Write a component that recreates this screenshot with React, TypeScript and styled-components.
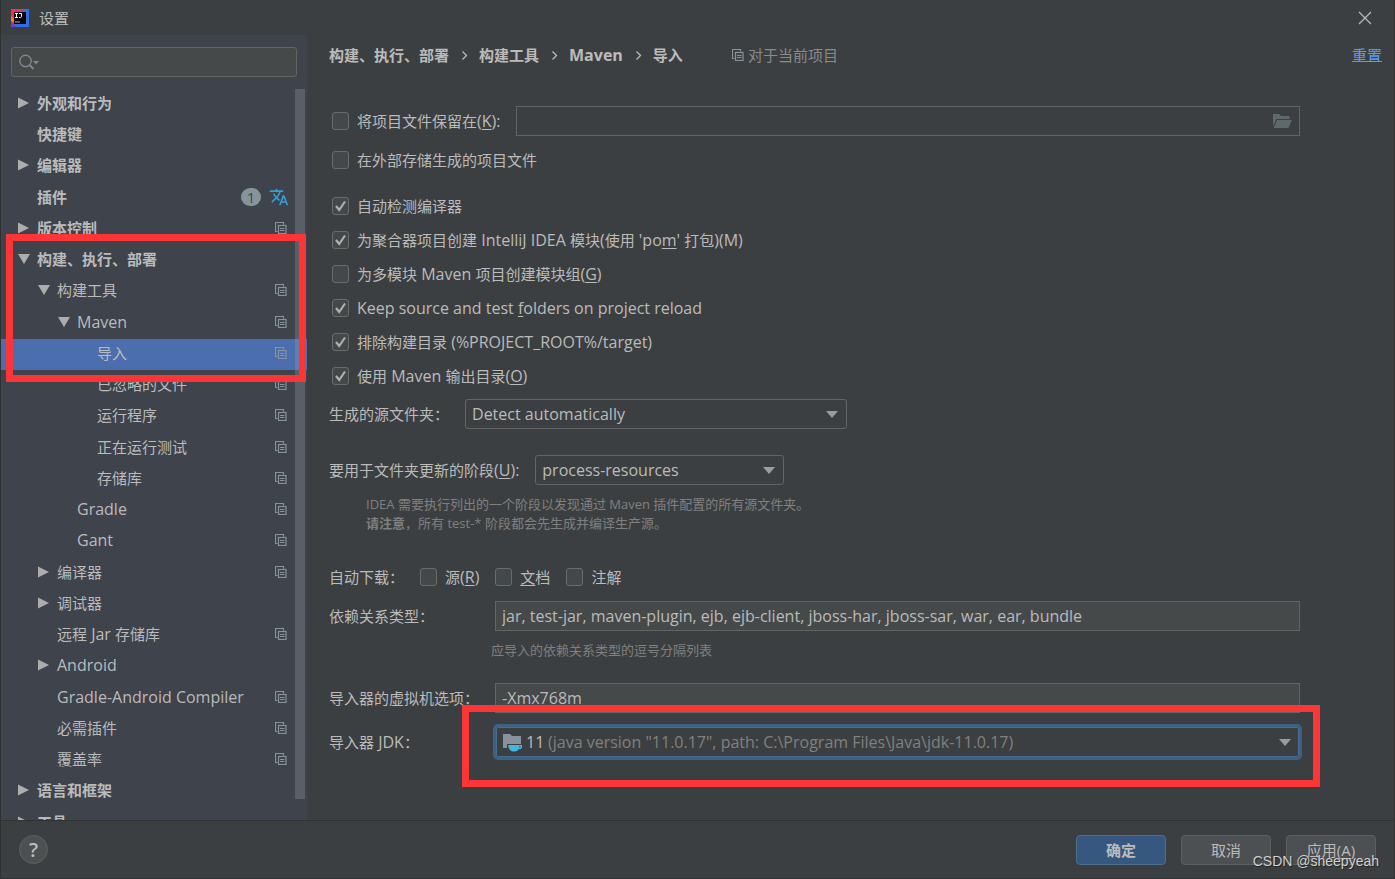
import React, { useId, useState } from "react";
import styled, { createGlobalStyle, css } from "styled-components";
import { MdTranslate } from "react-icons/md";

const GlobalStyle = createGlobalStyle`
  * { box-sizing: border-box; }
  html, body { margin: 0; height: 100%; }
  #root { height: 100%; }
  body, button, input, select {
    font-family: "Open Sans", "Noto Sans CJK SC", sans-serif;
    font-size: 15px;
    line-height: 20px;
    color: #bbbbbb;
  }
  body { background: #3c3f41; }
  u { text-underline-offset: 2px; }
`;

/* Latin runs are set one size up so that they balance the Chinese text. */
const Latin = styled.span`
  font-size: 16px;
`;

const Window = styled.div`
  position: relative;
  display: flex;
  flex-direction: column;
  height: 100vh;
  min-height: 600px;
  background: #3c3f41;
  border: 1px solid #2f3133;
  border-top: 0;
  overflow: hidden;
`;

const TitleBar = styled.header`
  display: flex;
  align-items: center;
  gap: 10px;
  height: 35px;
  flex: none;
  padding: 0 22px 0 10px;
`;

const Title = styled.h1`
  flex: 1;
  margin: 0;
  font-size: 15px;
  font-weight: 400;
`;

const PlainButton = styled.button`
  display: flex;
  padding: 0;
  border: 0;
  background: none;
  cursor: pointer;
`;

const Body = styled.div`
  display: flex;
  flex: 1;
  min-height: 0;
`;

const Sidebar = styled.aside`
  display: flex;
  flex-direction: column;
  width: 306px;
  flex: none;
  padding-top: 12px;
  background: #3e434c;
`;

const SearchBox = styled.label`
  display: flex;
  align-items: center;
  height: 30px;
  flex: none;
  margin: 0 10px 12px;
  padding-left: 7px;
  border: 1px solid #646464;
  border-radius: 3px;
  background: #45494a;
`;

const SearchInput = styled.input`
  flex: 1;
  min-width: 0;
  height: 100%;
  border: 0;
  outline: 0;
  background: none;
`;

const TreeArea = styled.div`
  position: relative;
  flex: 1;
  min-height: 0;
`;

const Tree = styled.ul`
  height: 100%;
  margin: 0;
  padding: 0;
  list-style: none;
  overflow: hidden;
`;

const TreeRow = styled.li<{ $level: number; $selected?: boolean }>`
  display: flex;
  align-items: center;
  height: 31px;
  padding: 0 20px 4px ${(p) => 15 + p.$level * 20}px;
  font-weight: ${(p) => (p.$level === 0 ? 700 : 400)};
  background: ${(p) => (p.$selected ? "#4b6eaf" : "none")};
  &:nth-child(4n + 3) { height: 32px; }
`;

const ArrowSlot = styled.span`
  display: flex;
  width: 21px;
  flex: none;
`;

const RowText = styled.span`
  flex: 1;
  white-space: nowrap;
`;

const Badge = styled.span`
  width: 20px;
  height: 18px;
  margin-right: 8px;
  border-radius: 10px;
  background: #87939a;
  color: #3e434c;
  font-weight: 400;
  line-height: 18px;
  text-align: center;
`;

const TranslateIcon = styled(MdTranslate)`
  width: 20px;
  height: 20px;
  margin-right: -2px;
  color: #389fd6;
  stroke: #389fd6;
`;

const ScrollThumb = styled.div`
  position: absolute;
  top: 0;
  right: 2px;
  bottom: 21px;
  width: 10px;
  background: rgba(166, 166, 176, 0.28);
`;

const mark = css`
  position: absolute;
  border: 7px solid #fc3636;
  pointer-events: none;
`;

const TreeMark = styled.div`
  ${mark}
  top: 145px;
  left: 5px;
  right: 1px;
  height: 148px;
`;

const FieldMark = styled.div`
  ${mark}
  inset: -22px -21px -30px -34px;
`;

const Content = styled.main`
  flex: 1;
  min-width: 0;
  padding: 10px 12px 0 22px;
`;

const Crumbs = styled.nav`
  display: flex;
  align-items: center;
  height: 20px;
  font-weight: 700;
`;

const CrumbLink = styled.span`
  white-space: nowrap;
`;

const Scope = styled.span`
  display: flex;
  align-items: center;
  gap: 4px;
  flex: 1;
  margin-left: 49px;
  color: #8a8a8a;
  font-weight: 400;
`;

const ResetLink = styled.a`
  color: #589df6;
  font-weight: 400;
  text-underline-offset: 0;
`;

const Form = styled.form`
  margin: 41px 82px 0 0;
`;

const Line = styled.div<{ $top?: number; $gap?: number }>`
  display: flex;
  align-items: center;
  gap: ${(p) => p.$gap ?? 16}px;
  margin-top: ${(p) => p.$top ?? 0}px;
`;

const CheckLabel = styled.label`
  display: flex;
  align-items: center;
  gap: 8px;
  height: 20px;
  padding-left: 3px;
  white-space: nowrap;
`;

const CheckWrap = styled.span`
  display: grid;
  flex: none;
  width: 17px;
  height: 18px;
  > * { grid-area: 1 / 1; }
`;

const CheckInput = styled.input`
  appearance: none;
  width: 17px;
  height: 18px;
  margin: 0;
  border: 1px solid #6b6b6b;
  border-radius: 3px;
  background: #43494a;
  & + svg { visibility: hidden; }
  &:checked + svg { visibility: visible; }
`;

const CheckList = styled.div`
  display: flex;
  flex-direction: column;
  gap: 14px;
  margin: 26px 0 13px;
`;

const FieldLabel = styled.label<{ $wide?: boolean }>`
  flex: none;
  width: ${(p) => (p.$wide ? "150px" : "auto")};
  white-space: nowrap;
`;

const TextBox = styled.input`
  flex: 1;
  min-width: 0;
  height: 30px;
  padding: 0 6px;
  border: 1px solid #646464;
  outline: 0;
  background: #45494a;
  font-size: 16px;
`;

const PathBox = styled.div`
  display: flex;
  align-items: center;
  flex: 1;
  height: 30px;
  padding-right: 7px;
  border: 1px solid #646464;
`;

const PathInput = styled.input`
  flex: 1;
  min-width: 0;
  height: 28px;
  padding: 0 7px;
  border: 0;
  outline: 0;
  background: none;
`;

const SelectWrap = styled.div<{ $width?: number; $focused?: boolean }>`
  position: relative;
  display: grid;
  align-items: center;
  ${(p) => (p.$width ? `width: ${p.$width}px;` : "flex: 1; min-width: 0;")}
  border: 1px solid #646464;
  border-radius: 3px;
  > * { grid-area: 1 / 1; }
  > svg { justify-self: end; margin-right: 8px; pointer-events: none; }
  ${(p) =>
    p.$focused &&
    css`
      margin: 0 -2px;
      border: 3px solid #3d6185;
      border-radius: 5px;
      box-shadow: inset 0 0 0 1px #466d94;
    `}
`;

const Select = styled.select<{ $indent?: boolean }>`
  appearance: none;
  width: 100%;
  height: ${(p) => (p.$indent ? 30 : 28)}px;
  padding: 0 24px 0 ${(p) => (p.$indent ? 30 : 6)}px;
  border: 0;
  outline: 0;
  background: none;
  font-size: 16px;
`;

const JdkDetail = styled.span`
  display: flex;
  align-items: center;
  gap: 26px;
  padding-left: 7px;
  color: #808080;
  font-size: 16px;
  white-space: nowrap;
  pointer-events: none;
`;

const Hint = styled.p<{ $indent: number; $top: number }>`
  margin: ${(p) => p.$top}px 0 0 ${(p) => p.$indent}px;
  color: #808080;
  font-size: 13px;
  line-height: 19px;
`;

const Footer = styled.footer`
  display: flex;
  align-items: center;
  gap: 15px;
  height: 58px;
  flex: none;
  padding: 0 18px;
  border-top: 1px solid #2f3133;
`;

const HelpButton = styled.button`
  width: 29px;
  height: 29px;
  margin-right: auto;
  padding: 0;
  border: 1px solid #5e6060;
  border-radius: 50%;
  background: #4c5052;
  font-size: 20px;
  font-weight: 600;
  line-height: 26px;
`;

const Button = styled.button<{ $primary?: boolean }>`
  width: 90px;
  height: 30px;
  padding: 0;
  border: 1px solid ${(p) => (p.$primary ? "#4c708c" : "#5e6060")};
  border-radius: 4px;
  background: ${(p) => (p.$primary ? "#365880" : "#4c5052")};
  font-weight: ${(p) => (p.$primary ? 700 : 400)};
`;

const Watermark = styled.div`
  position: absolute;
  right: 15px;
  bottom: 7px;
  color: #d0d0d0;
  font-family: "Liberation Sans", sans-serif;
  font-size: 14px;
  text-shadow: 1px 1px 1px #222222;
  pointer-events: none;
`;

const Logo = () => (
  <svg width="18" height="18" viewBox="0 0 18 18" aria-hidden="true">
    <defs>
      <linearGradient id="edge" x1="0" y1="0" x2="1" y2="0.6">
        <stop offset="0" stopColor="#fe2857" />
        <stop offset="0.4" stopColor="#e8306c" />
        <stop offset="0.6" stopColor="#3a6fe0" />
        <stop offset="1" stopColor="#2b6fe8" />
      </linearGradient>
    </defs>
    <rect width="18" height="18" fill="url(#edge)" />
    <path d="M0 7l3 3v4l-3-2z" fill="#fc801d" />
    <path d="M0 12l6 6H0z" fill="#7a3fc0" />
    <path d="M5 18l2-3h11v3z" fill="#2b6fe8" />
    <rect x="3" y="3" width="12" height="12" fill="#0b0508" />
    <path d="M4 4.500h3M5.500 4.500v4M4 8.500h3M8 4.500h2.500v3q0 1-1.200 1h-1.300" stroke="#fff" fill="none" />
    <path d="M4 13h5" stroke="#b0b0b0" />
  </svg>
);

const CloseIcon = () => (
  <svg width="14" height="14" viewBox="0 0 14 14" aria-hidden="true">
    <path d="M1 1l12 12M13 1L1 13" stroke="#bbbbbb" strokeWidth="1.200" />
  </svg>
);

const SearchIcon = () => (
  <svg width="22" height="16" viewBox="0 0 22 16" aria-hidden="true">
    <circle cx="6.500" cy="7" r="5.700" fill="none" stroke="#7d878c" strokeWidth="1.400" />
    <path d="M10.500 11l4 4" stroke="#7d878c" strokeWidth="2" />
    <path d="M14 7h6l-3 3.500z" fill="#7d878c" />
  </svg>
);

const ScopeIcon = () => (
  <svg width="12" height="12" viewBox="0 0 12 12" fill="none" stroke="#87939a" aria-hidden="true">
    <path d="M8.500 2.500V.5H.5V9.500H2.500" strokeWidth="1.200" />
    <rect x="3.500" y="3.500" width="7.500" height="8" strokeWidth="1.200" />
    <path d="M5 6.500h4.500M5 8.500h4.500" />
  </svg>
);

const Arrow = ({ open }: { open: boolean }) => (
  <svg width="14" height="14" viewBox="0 0 14 14" fill="#adadad" aria-hidden="true">
    {open ? <path d="M2 2h12L8 12z" /> : <path d="M2 1.500v11l11-5.500z" />}
  </svg>
);

const Chevron = () => (
  <svg width="30" height="12" viewBox="0 0 30 12" aria-hidden="true">
    <path d="M13.500 2.500l4 4-4 4" fill="none" stroke="#bbbbbb" strokeWidth="1.300" />
  </svg>
);

const DropArrow = () => (
  <svg width="12" height="7" viewBox="0 0 12 7" aria-hidden="true">
    <path d="M0 0h12L6 7z" fill="#9a9da0" />
  </svg>
);

const Tick = () => (
  <svg width="17" height="18" viewBox="0 0 17 18" aria-hidden="true">
    <path d="M4 9l3.200 4L13 4.500" fill="none" stroke="#b0b0b0" strokeWidth="2.200" />
  </svg>
);

const FolderIcon = () => (
  <svg width="19" height="15" viewBox="0 0 19 15" fill="#5f686b" aria-hidden="true">
    <path d="M0 0h6l2 2h8.500v3H3.500L0 12z" />
    <path d="M4 6h15l-3.500 8H.5z" />
  </svg>
);

const JdkIcon = () => (
  <svg width="19" height="20" viewBox="0 0 19 20" aria-hidden="true">
    <path d="M0 2h7l2 2h9v8H4v4H0z" fill="#87939a" />
    <path d="M5 13h14v2.500q0 1.800-3.500 1.800-1.500 2.200-3.500 2.200h-2q-4 0-5-6.500z" fill="#40b6e0" />
    <path d="M16 14.500h1.500v1H16z" fill="#3c3f41" />
  </svg>
);

type Node = {
  text: React.ReactNode;
  level: number;
  arrow?: "open" | "closed";
  scope?: boolean;
  plugin?: boolean;
  selected?: boolean;
};

const nodes: Node[] = [
  { text: "外观和行为", level: 0, arrow: "closed" },
  { text: "快捷键", level: 0 },
  { text: "编辑器", level: 0, arrow: "closed" },
  { text: "插件", level: 0, plugin: true },
  { text: "版本控制", level: 0, arrow: "closed", scope: true },
  { text: "构建、执行、部署", level: 0, arrow: "open" },
  { text: "构建工具", level: 1, arrow: "open", scope: true },
  { text: <Latin>Maven</Latin>, level: 2, arrow: "open", scope: true },
  { text: "导入", level: 3, scope: true, selected: true },
  { text: "已忽略的文件", level: 3, scope: true },
  { text: "运行程序", level: 3, scope: true },
  { text: "正在运行测试", level: 3, scope: true },
  { text: "存储库", level: 3, scope: true },
  { text: <Latin>Gradle</Latin>, level: 2, scope: true },
  { text: <Latin>Gant</Latin>, level: 2, scope: true },
  { text: "编译器", level: 1, arrow: "closed", scope: true },
  { text: "调试器", level: 1, arrow: "closed" },
  { text: <>远程<Latin> Jar </Latin>存储库</>, level: 1, scope: true },
  { text: <Latin>Android</Latin>, level: 1, arrow: "closed" },
  { text: <Latin>Gradle-Android Compiler</Latin>, level: 1, scope: true },
  { text: "必需插件", level: 1, scope: true },
  { text: "覆盖率", level: 1, scope: true },
  { text: "语言和框架", level: 0, arrow: "closed" },
  { text: "工具", level: 0, arrow: "closed" },
];

const crumbs: React.ReactNode[] = ["构建、执行、部署", "构建工具", <Latin>Maven</Latin>, "导入"];

function Check({ checked = false, children }: { checked?: boolean; children: React.ReactNode }) {
  const [on, setOn] = useState(checked);
  const id = useId();
  return (
    <CheckLabel htmlFor={id}>
      <CheckWrap>
        <CheckInput id={id} type="checkbox" checked={on} onChange={() => setOn(!on)} />
        <Tick />
      </CheckWrap>
      <span>{children}</span>
    </CheckLabel>
  );
}

export default function App() {
  return (
    <Window>
      <GlobalStyle />
      <TitleBar>
        <Logo />
        <Title>设置</Title>
        <PlainButton aria-label="关闭">
          <CloseIcon />
        </PlainButton>
      </TitleBar>
      <Body>
        <Sidebar>
          <SearchBox>
            <SearchIcon />
            <SearchInput type="text" aria-label="搜索" />
          </SearchBox>
          <TreeArea>
            <Tree>
              {nodes.map((n, i) => (
                <TreeRow key={i} $level={n.level} $selected={n.selected}>
                  <ArrowSlot>{n.arrow && <Arrow open={n.arrow === "open"} />}</ArrowSlot>
                  <RowText>{n.text}</RowText>
                  {n.plugin && (
                    <>
                      <Badge>1</Badge>
                      <TranslateIcon />
                    </>
                  )}
                  {n.scope && <ScopeIcon />}
                </TreeRow>
              ))}
            </Tree>
            <ScrollThumb />
            <TreeMark />
          </TreeArea>
        </Sidebar>
        <Content>
          <Crumbs>
            {crumbs.map((c, i) => (
              <React.Fragment key={i}>
                {i > 0 && <Chevron />}
                <CrumbLink>{c}</CrumbLink>
              </React.Fragment>
            ))}
            <Scope>
              <ScopeIcon />
              对于当前项目
            </Scope>
            <ResetLink href="#reset">重置</ResetLink>
          </Crumbs>
          <Form onSubmit={(e) => e.preventDefault()}>
            <Line>
              <Check>
                将项目文件保留在<Latin>(<u>K</u>):</Latin>
              </Check>
              <PathBox>
                <PathInput type="text" aria-label="项目文件目录" />
                <PlainButton type="button" aria-label="浏览">
                  <FolderIcon />
                </PlainButton>
              </PathBox>
            </Line>
            <Line $top={14}>
              <Check>在外部存储生成的项目文件</Check>
            </Line>
            <CheckList>
              <Check checked>自动检测编译器</Check>
              <Check checked>
                为聚合器项目创建<Latin> IntelliJ IDEA </Latin>模块<Latin>(</Latin>使用
                <Latin> 'po<u>m</u>' </Latin>打包<Latin>)(M)</Latin>
              </Check>
              <Check>
                为多模块<Latin> Maven </Latin>项目创建模块组<Latin>(<u>G</u>)</Latin>
              </Check>
              <Check checked>
                <Latin>
                  Keep source and test <u>f</u>olders on project reload
                </Latin>
              </Check>
              <Check checked>
                排除构建目录<Latin> (%PROJECT_ROOT%/target)</Latin>
              </Check>
              <Check checked>
                使用<Latin> Maven </Latin>输出目录<Latin>(<u>O</u>)</Latin>
              </Check>
            </CheckList>
            <Line>
              <FieldLabel htmlFor="sources">生成的源文件夹：</FieldLabel>
              <SelectWrap $width={382}>
                <Select id="sources">
                  <option>Detect automatically</option>
                </Select>
                <DropArrow />
              </SelectWrap>
            </Line>
            <Line $top={26}>
              <FieldLabel htmlFor="phase">
                要用于文件夹更新的阶段<Latin>(<u>U</u>):</Latin>
              </FieldLabel>
              <SelectWrap $width={249}>
                <Select id="phase">
                  <option>process-resources</option>
                </Select>
                <DropArrow />
              </SelectWrap>
            </Line>
            <Hint $indent={37} $top={10}>
              IDEA 需要执行列出的一个阶段以发现通过 Maven 插件配置的所有源文件夹。
              <br />
              <b>请注意</b>，所有 test-* 阶段都会先生成并编译生产源。
            </Hint>
            <Line $top={34} $gap={13}>
              <span>自动下载：</span>
              <Check>
                源<Latin>(<u>R</u>)</Latin>
              </Check>
              <Check>
                <u>文</u>档
              </Check>
              <Check>注解</Check>
            </Line>
            <Line $top={14}>
              <FieldLabel htmlFor="types" $wide>
                依赖关系类型：
              </FieldLabel>
              <TextBox
                id="types"
                defaultValue="jar, test-jar, maven-plugin, ejb, ejb-client, jboss-har, jboss-sar, war, ear, bundle"
              />
            </Line>
            <Hint $indent={162} $top={10}>
              应导入的依赖关系类型的逗号分隔列表
            </Hint>
            <Line $top={23}>
              <FieldLabel htmlFor="vm" $wide>
                导入器的虚拟机选项：
              </FieldLabel>
              <TextBox id="vm" defaultValue="-Xmx768m" />
            </Line>
            <Line $top={11}>
              <FieldLabel htmlFor="jdk" $wide>
                导入器<Latin> JDK</Latin>：
              </FieldLabel>
              <SelectWrap $focused>
                <Select id="jdk" $indent>
                  <option>11</option>
                </Select>
                <JdkDetail>
                  <JdkIcon />
                  (java version "11.0.17", path: C:\Program Files\Java\jdk-11.0.17)
                </JdkDetail>
                <DropArrow />
                <FieldMark />
              </SelectWrap>
            </Line>
          </Form>
        </Content>
      </Body>
      <Footer>
        <HelpButton aria-label="帮助">?</HelpButton>
        <Button $primary>确定</Button>
        <Button>取消</Button>
        <Button>
          应用(<u>A</u>)
        </Button>
      </Footer>
      <Watermark>CSDN @sheepyeah</Watermark>
    </Window>
  );
}
